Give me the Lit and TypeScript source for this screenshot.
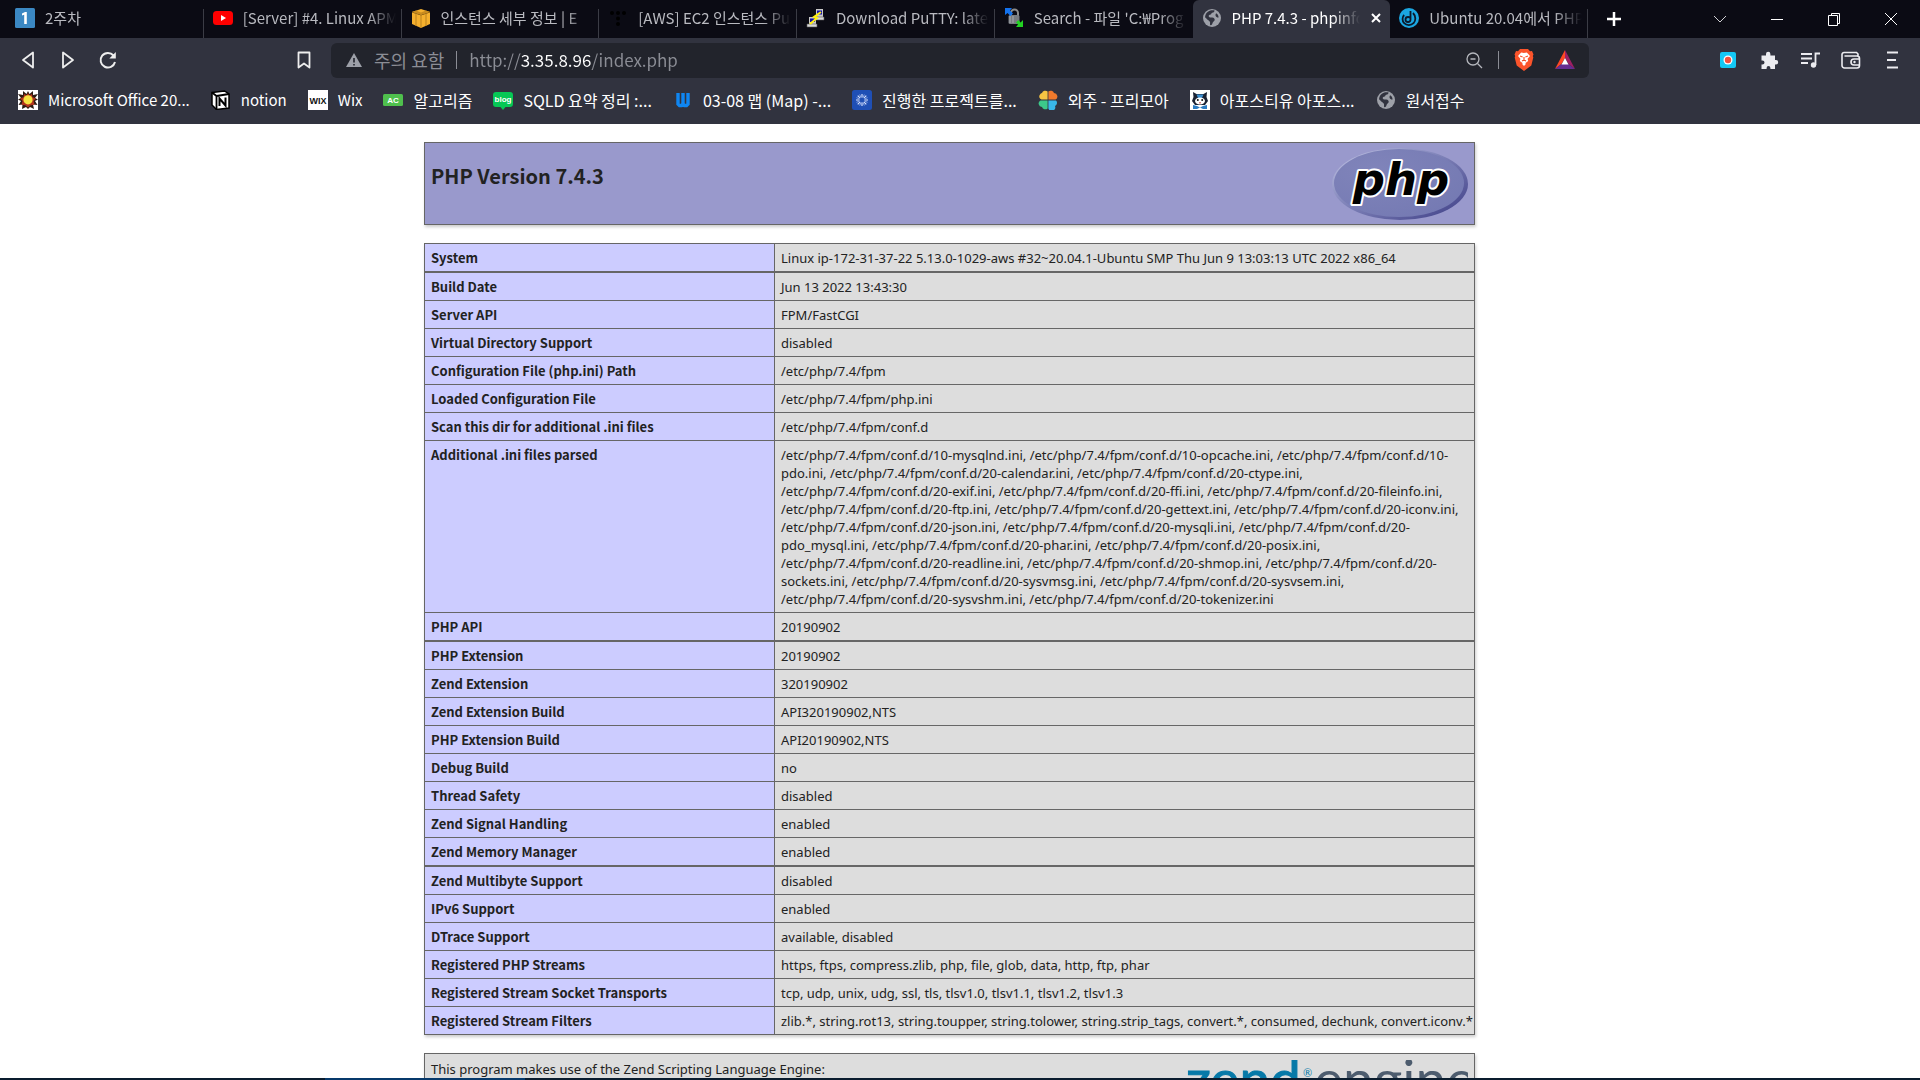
import { LitElement, html, css, svg } from "lit";
import { customElement } from "lit/decorators.js";
import { classMap } from "lit/directives/class-map.js";

const box = (size: number, body: unknown, view = 20) =>
  html`<svg width=${size} height=${size} viewBox="0 0 ${view} ${view}" aria-hidden="true">${body}</svg>`;

const globe = svg`<circle cx="10" cy="10" r="9" fill="#9da0a8"/>
  <path d="M12.6 2.6c-.2 1.7-1.2 1.9-2.3 2.2-.9.3-.8 1.4-1.7 1.8-1 .4-2 .6-1.9 1.7.1 1 1.2 1.2 2.4 1.3 1.6.1 3.4.2 3.6 1.9.2 1.6-1.3 1.8-1.8 2.8-.5 1-.6 2.5-2 3l-.8-.2c-.3-1.6.4-2.6-.4-3.7-.9-1.2-2.3-1.4-3.3-2.9L3 9.2c.2-2.6 1.4-4.5 3.3-5.7 1.8-1.1 4.2-1.6 6.3-.9z" fill="#31333f"/>
  <path d="M14.2 5.2c1.3.6 2.3 2.3 2.4 4.3-1.1.3-2.6-.3-3-1.7-.3-1 .1-1.9.6-2.6z" fill="#31333f"/>`;

const icons: Record<string, unknown> = {
  one: svg`<rect width="20" height="20" rx="1.5" fill="#3b88c3"/><path d="M7 5.600 10 4h1.800v12H9.200V6.800L7 7.600z" fill="#fff"/>`,
  youtube: svg`<rect y="3" width="20" height="14" rx="3.5" fill="#f00"/><path d="M8 7v6l5-3z" fill="#fff"/>`,
  cube: svg`<path d="M1 4 10 1l9 3v12l-9 4-9-4z" fill="#f5b02e"/><path d="M1 4 10 7l9-3" stroke="#6b4a10" fill="none"/><path d="M10 7v13M5 5.5v12.5M15 5.5v12.5" stroke="#b9801c" fill="none"/><path d="M1 4l4-1.4 5 1.8 5-1.8L19 4l-9 3z" fill="#c98b1e"/>`,
  dots: svg`<g fill="#000"><circle cx="4" cy="5" r="2"/><circle cx="10" cy="5" r="2"/><circle cx="16" cy="5" r="2"/><circle cx="10" cy="10.5" r="2"/><circle cx="10" cy="16" r="2"/></g>`,
  putty: svg`<path d="M10 1h7v8h-7zM3 9h7v7H3z" fill="#c9c9c9"/><path d="M11 2.5h5v4h-5zM4 10.5h5v3.5H4z" fill="#1010b0"/><path d="M9 9h9v3H9zM1 16h10v3H1z" fill="#d8d8d8" stroke="#555" stroke-width=".6"/><path d="M15 4 8 9l3 1-7 6" stroke="#ffef10" stroke-width="2" fill="none"/>`,
  lock: svg`<path d="M7 8V5a3.5 3.5 0 0 1 7 0v3" stroke="#8b8b8b" stroke-width="2" fill="none"/><rect x="4.5" y="7" width="11" height="9" rx="1.5" fill="#777b80"/><path d="M6 8v7M9 8v7" stroke="#a9adb0"/><path d="M1 0h7L6 2.5l3 3L6.5 8l-3-3L1 7z" fill="#1372ee"/><path d="M19 19h-7l2-2.5-2-2L14.5 12l2 2.5L19 12z" fill="#22d322"/>`,
  globe,
  swirl: svg`<circle cx="10" cy="10" r="10" fill="#1ba7e2"/><path d="M11.5 3v8.5a2.5 2.5 0 1 1-2.5-2.5c1 0 1.7.3 2.5 1M14 5c3 3 3 8 .5 10.2-2.5 2.6-7 2.4-9.3 0C3 13 3 9 5.2 7" stroke="#0b1a2c" stroke-width="1.8" fill="none"/>`,
  office: svg`<rect width="20" height="20" fill="#fff"/><path d="M10 1l1.5 3 3.5-3v4l5-1-3 4 3 1.5-3 1.5 2.5 4-4.5-.5L16 19l-4-2-2 2-2-2-4 2 .5-4.5L.5 15 3 11 0 9.5 3 8 0 4l5 1V1l3.5 3z" fill="#2c1c12"/><path d="M10 3l1.600 2.200L14 4l.4 3L18 8.5l-2.5 2.5 1 3.8-3.7.4L10 17.5l-2.8-2.3-3.7-.4 1-3.8L2 8.5 5.600 7 6 4l2.5 1.2z" fill="#b2341c"/><circle cx="10" cy="9.8" r="4.6" fill="#f5e340"/>`,
  notion: svg`<path d="M1 2.5 13.5 1 18 4v14l-12.5 1.5L1 15z" fill="#fff" stroke="#000" stroke-width="1.5"/><path d="M1 2.5 5.5 6v13.5M5.5 6 18 4" stroke="#000" stroke-width="1.8" fill="none"/><path d="M8.5 16V8.5l6 7V7.5" stroke="#000" stroke-width="2" fill="none"/>`,
  wix: svg`<rect width="20" height="20" fill="#fff"/><text x="10" y="13.5" text-anchor="middle" font-family="Liberation Sans" font-weight="700" font-size="9" fill="#111">WIX</text>`,
  ac: svg`<rect y="4" width="20" height="12" rx="1.5" fill="#4fc04d"/><text x="10" y="13" text-anchor="middle" font-family="Liberation Sans" font-weight="700" font-size="8" fill="#fff">AC</text>`,
  blog: svg`<path d="M3 2h14a3 3 0 0 1 3 3v9a3 3 0 0 1-3 3h-4.5L10 20l-2.5-3H3a3 3 0 0 1-3-3V5a3 3 0 0 1 3-3z" fill="#06c755"/><text x="10" y="12" text-anchor="middle" font-family="Liberation Sans" font-weight="700" font-size="8" fill="#fff">blog</text>`,
  w: svg`<path d="M5 3v11l1.500 1.500h2L10 14l1.500 1.500h2L15 14V3M10 3v11" stroke="#0f86f2" stroke-width="3.400" fill="none"/>`,
  burst: svg`<rect width="20" height="20" rx="2.5" fill="#1f4fb5"/><g stroke="#dfe8ff" stroke-width="1.100"><path d="M10 4v3.500M10 12.500V16M4 10h3.500M12.500 10H16M5.700 5.700l2.500 2.500M11.800 11.800l2.500 2.500M14.300 5.700l-2.500 2.500M8.200 11.800l-2.500 2.500"/></g><g stroke="#a9bdf0" stroke-width=".8"><path d="M7.700 4.500l1.300 3.100M11 12.400l1.300 3.100M12.300 4.500 11 7.600M9 12.400l-1.300 3.100M4.500 7.700 7.600 9M12.400 11l3.100 1.300M4.500 12.300 7.600 11M12.400 9l3.100-1.300"/></g>`,
  clover: svg`<path d="M9.600 9.600H3.500A3.200 3.200 0 0 1 2 4.500a3 3 0 0 1 2-1.500A3.500 3.500 0 0 1 9.600 1.500z" fill="#f7c443"/><path d="M10.400 9.600V1.500A3.500 3.500 0 0 1 16 3a3.500 3.500 0 0 1 1.500 6.600z" fill="#f07a2c"/><path d="M9.600 10.400v8.100A3.500 3.500 0 0 1 4 17a3.500 3.500 0 0 1-1.500-6.600z" fill="#3cc88a"/><path d="M10.400 10.400h7.600A3.500 3.500 0 0 1 17 16a3.500 3.500 0 0 1-6.600 2.500z" fill="#39b7e8"/>`,
  mascot: svg`<rect width="20" height="20" fill="#fff"/><path d="M3 2l3.500 2h7L17 2l-.5 5 1.500 4-3 4H5l-3-4 1.500-4z" fill="#1b2233"/><path d="M6.500 4.500h7L12 8H8z" fill="#3c8fd0"/><ellipse cx="10" cy="11" rx="5" ry="3.500" fill="#fff"/><circle cx="7.800" cy="10" r="1" fill="#111"/><circle cx="12.200" cy="10" r="1" fill="#111"/><path d="M9 12.300h2L10 14z" fill="#c33"/><path d="M3 15l4 1 3 1.500L13 16l4-1v4h-4l-3-1.500L7 19H3z" fill="#2b7cc4"/>`,
};

interface Tab { icon: string; title: string; active?: boolean }
const tabs: Tab[] = [
  { icon: "one", title: "2주차" },
  { icon: "youtube", title: "[Server] #4. Linux APM" },
  { icon: "cube", title: "인스턴스 세부 정보 | E" },
  { icon: "dots", title: "[AWS] EC2 인스턴스 Pu" },
  { icon: "putty", title: "Download PuTTY: lates" },
  { icon: "lock", title: "Search - 파일 'C:₩Prog" },
  { icon: "globe", title: "PHP 7.4.3 - phpinfo", active: true },
  { icon: "swirl", title: "Ubuntu 20.04에서 PHP" },
];

const bookmarks: [string, string][] = [
  ["office", "Microsoft Office 20..."],
  ["notion", "notion"],
  ["wix", "Wix"],
  ["ac", "알고리즘"],
  ["blog", "SQLD 요약 정리 :..."],
  ["w", "03-08 맵 (Map) -..."],
  ["burst", "진행한 프로젝트를..."],
  ["clover", "외주 - 프리모아"],
  ["mascot", "아포스티유 아포스..."],
  ["globe", "원서접수"],
];

interface Row { name: string; value: string[]; heavy?: boolean }
const rows: Row[] = [
  { name: "System", value: ["Linux ip-172-31-37-22 5.13.0-1029-aws #32~20.04.1-Ubuntu SMP Thu Jun 9 13:03:13 UTC 2022 x86_64"], heavy: true },
  { name: "Build Date", value: ["Jun 13 2022 13:43:30"] },
  { name: "Server API", value: ["FPM/FastCGI"] },
  { name: "Virtual Directory Support", value: ["disabled"] },
  { name: "Configuration File (php.ini) Path", value: ["/etc/php/7.4/fpm"] },
  { name: "Loaded Configuration File", value: ["/etc/php/7.4/fpm/php.ini"] },
  { name: "Scan this dir for additional .ini files", value: ["/etc/php/7.4/fpm/conf.d"] },
  {
    name: "Additional .ini files parsed",
    value: [
      "/etc/php/7.4/fpm/conf.d/10-mysqlnd.ini, /etc/php/7.4/fpm/conf.d/10-opcache.ini, /etc/php/7.4/fpm/conf.d/10-",
      "pdo.ini, /etc/php/7.4/fpm/conf.d/20-calendar.ini, /etc/php/7.4/fpm/conf.d/20-ctype.ini,",
      "/etc/php/7.4/fpm/conf.d/20-exif.ini, /etc/php/7.4/fpm/conf.d/20-ffi.ini, /etc/php/7.4/fpm/conf.d/20-fileinfo.ini,",
      "/etc/php/7.4/fpm/conf.d/20-ftp.ini, /etc/php/7.4/fpm/conf.d/20-gettext.ini, /etc/php/7.4/fpm/conf.d/20-iconv.ini,",
      "/etc/php/7.4/fpm/conf.d/20-json.ini, /etc/php/7.4/fpm/conf.d/20-mysqli.ini, /etc/php/7.4/fpm/conf.d/20-",
      "pdo_mysql.ini, /etc/php/7.4/fpm/conf.d/20-phar.ini, /etc/php/7.4/fpm/conf.d/20-posix.ini,",
      "/etc/php/7.4/fpm/conf.d/20-readline.ini, /etc/php/7.4/fpm/conf.d/20-shmop.ini, /etc/php/7.4/fpm/conf.d/20-",
      "sockets.ini, /etc/php/7.4/fpm/conf.d/20-sysvmsg.ini, /etc/php/7.4/fpm/conf.d/20-sysvsem.ini,",
      "/etc/php/7.4/fpm/conf.d/20-sysvshm.ini, /etc/php/7.4/fpm/conf.d/20-tokenizer.ini",
    ],
  },
  { name: "PHP API", value: ["20190902"], heavy: true },
  { name: "PHP Extension", value: ["20190902"] },
  { name: "Zend Extension", value: ["320190902"] },
  { name: "Zend Extension Build", value: ["API320190902,NTS"] },
  { name: "PHP Extension Build", value: ["API20190902,NTS"] },
  { name: "Debug Build", value: ["no"] },
  { name: "Thread Safety", value: ["disabled"] },
  { name: "Zend Signal Handling", value: ["enabled"] },
  { name: "Zend Memory Manager", value: ["enabled"], heavy: true },
  { name: "Zend Multibyte Support", value: ["disabled"] },
  { name: "IPv6 Support", value: ["enabled"] },
  { name: "DTrace Support", value: ["available, disabled"] },
  { name: "Registered PHP Streams", value: ["https, ftps, compress.zlib, php, file, glob, data, http, ftp, phar"] },
  { name: "Registered Stream Socket Transports", value: ["tcp, udp, unix, udg, ssl, tls, tlsv1.0, tlsv1.1, tlsv1.2, tlsv1.3"] },
  { name: "Registered Stream Filters", value: ["zlib.*, string.rot13, string.toupper, string.tolower, string.strip_tags, convert.*, consumed, dechunk, convert.iconv.*"] },
];

@customElement("browser-tabs")
class BrowserTabs extends LitElement {
  static styles = css`
    :host { display: flex; height: 38px; background: #0b0b14; color: #b9bac0; font-size: 15px; }
    button { font: inherit; color: inherit; background: none; border: 0; padding: 0 0 1px; }
    svg { display: block; flex: none; }
    .strip { display: flex; flex: 0 1 1582px; min-width: 0; padding-left: 6px; }
    .tab { position: relative; display: flex; flex: 1 1 0; min-width: 0; align-items: center; gap: 10px; padding: 0 6px 2px 9px; text-align: left; }
    .tab::after { content: ""; position: absolute; right: 0; top: 9px; bottom: 0; width: 1px; background: #3b3c45; }
    .active { background: #31333f; color: #fff; border-radius: 6px 6px 0 0; }
    .active::after, .before-active::after { display: none; }
    .title { flex: 1; min-width: 0; overflow: hidden; white-space: nowrap; line-height: 24px;
      -webkit-mask-image: linear-gradient(to left, transparent, #000 28px); mask-image: linear-gradient(to left, transparent, #000 28px); }
    .shut { padding-right: 2px; }
    .plus { width: 52px; display: grid; place-items: center; }
    .window { display: flex; margin-left: auto; color: #fff; padding-right: 1px; }
    .window button { width: 57px; display: grid; place-items: center; }
  `;
  render() {
    return html`
      <div class="strip" role="tablist">
        ${tabs.map((t, i) => html`
          <button role="tab" aria-selected=${t.active ? "true" : "false"}
            class=${classMap({ tab: true, active: !!t.active, "before-active": !!tabs[i + 1]?.active })}>
            ${box(20, icons[t.icon])}
            <span class="title">${t.title}</span>
            ${t.active ? html`<span class="shut">${box(12, svg`<path d="M2 2l8 8M10 2l-8 8" stroke="#fff" stroke-width="2"/>`, 12)}</span>` : ""}
          </button>`)}
      </div>
      <button class="plus" aria-label="New tab">${box(16, svg`<path d="M8 1v14M1 8h14" stroke="#fff" stroke-width="2.5"/>`, 16)}</button>
      <div class="window">
        <button aria-label="Search tabs">${box(14, svg`<path d="M1 4l6 6 6-6" stroke="#d0d0d4" fill="none"/>`, 14)}</button>
        <button aria-label="Minimize">${box(14, svg`<path d="M1 7.5h12" stroke="#fff"/>`, 14)}</button>
        <button aria-label="Restore">${box(14, svg`<path d="M1.5 3.5h9v10h-9zM4.5 3V1.5h8v10H11" stroke="#fff" fill="none"/>`, 14)}</button>
        <button aria-label="Close">${box(14, svg`<path d="M1 1l12 12M13 1L1 13" stroke="#fff"/>`, 14)}</button>
      </div>`;
  }
}

@customElement("browser-toolbar")
class BrowserToolbar extends LitElement {
  static styles = css`
    :host { display: flex; align-items: center; height: 44px; background: #31333f; color: #e6e6ea; }
    button { width: 40px; height: 36px; padding: 0; border: 0; background: none; display: grid; place-items: center; flex: none; }
    svg { display: block; flex: none; }
    .nav { display: flex; flex: 0 0 324px; box-sizing: border-box; padding-left: 8px; }
    .nav .mark { margin-left: auto; }
    .bar { flex: 1; min-width: 0; display: flex; align-items: center; height: 35px; margin-left: 7px; padding-right: 4px; border-radius: 6px; background: #22242c; color: #8b8d95; font-size: 17px; }
    .bar button { width: 41px; }
    label { font-size: 18px; line-height: 30px; }
    .bar .warn { margin: 0 12px 0 15px; }
    .rule { width: 1px; height: 18px; background: #8b8d95; margin: 0 12px; }
    .url { flex: 1; min-width: 0; border: 0; outline: 0; padding: 0; font: inherit; line-height: 30px;
      color: transparent; background: linear-gradient(to right, #8b8d95 51px, #fff 51px 123px, #8b8d95 123px); background-clip: text; -webkit-background-clip: text; }
    .bar .rule.thin { margin: 0 4px; }
    .tools { display: flex; gap: 1px; flex: 0 0 331px; justify-content: flex-end; padding-right: 8px; box-sizing: border-box; }
  `;
  render() {
    const b = (label: string, icon: unknown, cls = "") => html`<button class=${cls} aria-label=${label}>${icon}</button>`;
    return html`
      <div class="nav">
        ${b("Back", box(20, svg`<path d="M15 2.5v15L5 10z" fill="none" stroke="#eee" stroke-width="1.8" stroke-linejoin="round"/>`))}
        ${b("Forward", box(20, svg`<path d="M5 2.5v15L15 10z" fill="none" stroke="#eee" stroke-width="1.8" stroke-linejoin="round"/>`))}
        ${b("Reload", box(20, svg`<path d="M15.5 5.5A7.3 7.3 0 1 0 17 12" fill="none" stroke="#eee" stroke-width="2"/><path d="M17.8 2v6.5h-6.5z" fill="#eee"/>`))}
        ${b("Bookmark this page", box(20, svg`<path d="M4.5 2.5h11v15L10 13.5l-5.5 4z" fill="none" stroke="#eee" stroke-width="1.8" stroke-linejoin="round"/>`), "mark")}
      </div>
      <div class="bar">
        <svg class="warn" width="16" height="16" viewBox="0 0 16 16" aria-hidden="true"><path d="M8 1l8 14H0z" fill="#9da0a8"/><path d="M8 6v4.5M8 12v1.5" stroke="#22242c" stroke-width="1.6"/></svg>
        <label for="url">주의 요함</label><span class="rule"></span>
        <input id="url" class="url" type="text" value="http://3.35.8.96/index.php" spellcheck="false">
        ${b("Zoom", box(18, svg`<circle cx="8" cy="8" r="6" fill="none" stroke="#b5b7bd" stroke-width="1.3"/><path d="M12.5 12.5l4.5 4.5M5.5 8h5" stroke="#b5b7bd" stroke-width="1.3"/>`, 18))}
        <span class="rule thin"></span>
        ${b("Brave Shields", box(22, svg`<path d="M7 0h8l2 2.2 2-.2 1.5 3.5-.7 1.5.5 1.5-2 8L11 22l-7.3-5.5-2-8L2.2 7 1.5 5.5 3 2l2 .2z" fill="#fb542b"/><path d="M11 4l2.8-.6L17 7l-2.4 2.8.6 2.2-2.7 2 .2 1.2L11 17l-1.7-1.8.2-1.2-2.7-2 .6-2.2L5 7l3.2-3.6z" fill="#fff"/><path d="M7 7l2.6 1M15 7l-2.6 1M9 12l2-1 2 1M11 8v3" stroke="#fb542b" stroke-width="1.2"/>`, 22))}
        ${b("Rewards", box(22, svg`<path d="M11 1v8l-3.5 6L1 20z" fill="#ff4724"/><path d="M11 1v8l3.5 6L21 20z" fill="#9e1f63"/><path d="M1 20l6.5-5h7L21 20z" fill="#662d91"/><path d="M11 9l3.5 6.5h-7z" fill="#fff"/>`, 22))}
      </div>
      <div class="tools">
        ${b("Recorder", box(18, svg`<rect x="1" y="1" width="16" height="16" rx="2" fill="#14c8f4"/><circle cx="9" cy="9" r="4.5" fill="#fff"/><circle cx="9" cy="9" r="3.2" fill="#f0503c"/>`, 18))}
        ${b("Extensions", box(20, svg`<path d="M7 4a2.2 2.2 0 0 1 4.4 0v1.5H16V10h1a2.2 2.2 0 0 1 0 4.4h-1V19h-4.6v-1a1.9 1.9 0 0 0-3.8 0v1H2.5v-4.6h1a2 2 0 0 0 0-4h-1V5.5H7z" fill="#ececf0"/>`))}
        ${b("Media", box(20, svg`<path d="M1 4h11M1 8.5h11M1 13h7" stroke="#ececf0" stroke-width="1.8"/><path d="M15.5 15V3.5H20" stroke="#ececf0" stroke-width="1.8" fill="none"/><circle cx="13.5" cy="15" r="2.7" fill="#ececf0"/>`))}
        ${b("Wallet", box(20, svg`<path d="M17 6V4L15.5 2.5H3A2 2 0 0 0 1 4.5v11A2.5 2.5 0 0 0 3.5 18H16a2.5 2.5 0 0 0 2.5-2.5v-7A2.5 2.5 0 0 0 16 6H3.5M18.5 9H13a3 3 0 0 0 0 6h5.5" fill="none" stroke="#ececf0" stroke-width="1.6"/><circle cx="13.5" cy="12" r="1.2" fill="#ececf0"/>`))}
        ${b("Menu", box(20, svg`<path d="M5 2.5h11M5 10h9M5 17.5h11" stroke="#ececf0" stroke-width="1.8"/>`))}
      </div>`;
  }
}

@customElement("bookmark-bar")
class BookmarkBar extends LitElement {
  static styles = css`
    :host { display: flex; gap: 21px; height: 42px; padding: 0 18px 6px; box-sizing: border-box; align-items: center; background: #31333f; font-size: 15px; overflow: hidden; }
    a { display: flex; gap: 10px; align-items: center; color: #fff; text-decoration: none; white-space: nowrap; line-height: 22px; }
    .hangul { font-size: 16px; }
    svg { display: block; flex: none; }
  `;
  render() {
    return bookmarks.map(([icon, label]) => html`
      <a href="#" class=${classMap({ hangul: /[가-힣]/.test(label) })}>${box(20, icons[icon])}<span>${label}</span></a>`);
  }
}

@customElement("php-info")
class PhpInfo extends LitElement {
  static styles = css`
    :host { display: block; background: #fff; color: #222; font-size: 13px; line-height: 18px; }
    .page { width: 1051px; max-width: 100%; margin: 0 auto; padding: 18px 21px 0 0; }
    .box { box-sizing: border-box; width: 100%; border: 1px solid #666; box-shadow: 1px 2px 3px #ccc; margin-bottom: 18px; }
    .head { display: flex; justify-content: space-between; background: #9999cc; height: 83px; padding: 5px 6px; }
    h1 { margin: 15px 0 0; font-size: 20px; line-height: 26px; font-weight: 700; }
    .head svg { display: block; }
    table { border-collapse: separate; border-spacing: 0; table-layout: fixed; }
    th, td { text-align: left; vertical-align: top; padding: 5px 6px 4px; border-bottom: 1px solid #666; white-space: nowrap; }
    tr:last-child > * { border-bottom: 0; }
    .heavy > * { border-bottom-width: 2px; }
    th { width: 337px; background: #ccccff; font-weight: 700; border-right: 1px solid #666; }
    td { background: #ddd; }
    td, p { font-family: "Noto Sans", "Noto Sans CJK KR", sans-serif; }
    .zend { display: flex; justify-content: space-between; background: #ddd; padding: 6px 6px; height: 90px; }
    p { margin: 0; }
  `;
  render() {
    return html`
      <div class="page">
        <header class="box head">
          <h1>PHP Version 7.4.3</h1>
          <svg width="136" height="72" viewBox="0 0 136 72" role="img" aria-label="PHP logo">
            <defs>
              <linearGradient id="rim" x1="0" y1="0" x2="1" y2="1"><stop offset="0" stop-color="#c8cae8"/><stop offset=".4" stop-color="#8589bd"/><stop offset="1" stop-color="#3c3c85"/></linearGradient>
              <radialGradient id="body" cx=".3" cy=".3" r=".8"><stop offset="0" stop-color="#8084ba"/><stop offset="1" stop-color="#757ab3"/></radialGradient>
            </defs>
            <ellipse cx="68" cy="36" rx="68" ry="36" fill="url(#rim)"/>
            <ellipse cx="67" cy="35" rx="65" ry="34" fill="url(#body)"/>
            <text x="69" y="47" text-anchor="middle" font-family="DejaVu Sans" font-weight="700" font-style="italic" font-size="45" fill="#000" stroke="#fff" stroke-width="4" stroke-linejoin="round" paint-order="stroke">php</text>
          </svg>
        </header>
        <table class="box">
          <tbody>
            ${rows.map((r) => html`<tr class=${classMap({ heavy: !!r.heavy })}>
              <th scope="row">${r.name}</th>
              <td>${r.value.map((line, i) => html`${i ? html`<br>` : ""}${line}`)}</td>
            </tr>`)}
          </tbody>
        </table>
        <section class="box zend">
          <p>This program makes use of the Zend Scripting Language Engine:</p>
          <svg width="284" height="60" viewBox="0 0 284 60" role="img" aria-label="Zend engine">
            <g font-family="Lato" font-size="55">
              <text x="2" y="39" fill="#0679a8" stroke="#0679a8">zend</text>
              <text x="119" y="17" fill="#0679a8" font-size="11">®</text>
              <text x="130" y="39" fill="#4d5c6e">engine</text>
            </g>
          </svg>
        </section>
      </div>`;
  }
}

@customElement("app-root")
class AppRoot extends LitElement {
  static styles = css`
    :host { display: flex; flex-direction: column; height: 100vh; overflow: hidden; font-family: "Noto Sans CJK KR", sans-serif; }
    browser-tabs, browser-toolbar, bookmark-bar { flex: none; }
    php-info { flex: 1; min-height: 0; overflow: hidden; }
    .taskbar { flex: none; height: 2px; background: linear-gradient(to right, #0a1c2e 325px, #07396b 325px 525px, #0a1c2e 525px); }
  `;
  render() {
    return html`<browser-tabs></browser-tabs><browser-toolbar></browser-toolbar><bookmark-bar></bookmark-bar>
      <php-info></php-info><div class="taskbar"></div>`;
  }
}
